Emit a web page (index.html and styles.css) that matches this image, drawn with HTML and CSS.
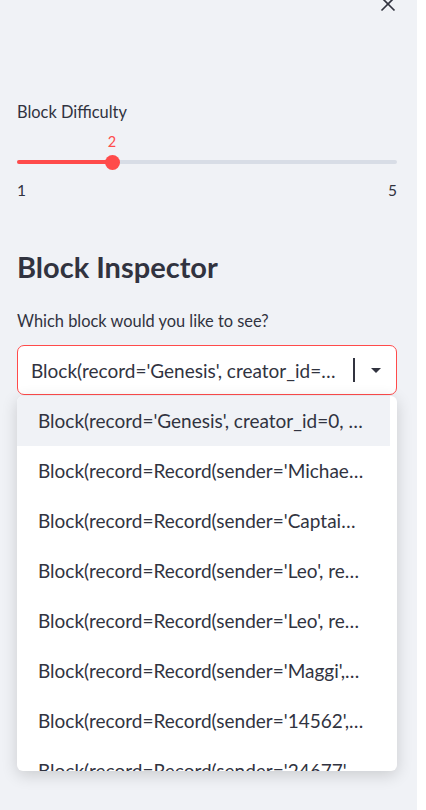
FILE: index.html
```html
<!DOCTYPE html>
<html lang="en">
<head>
    <meta charset="UTF-8">
    <meta name="viewport" content="width=device-width, initial-scale=1.0">
    <title>Blockchain</title>
    <link rel="stylesheet" href="styles.css">
</head>
<body>
    <aside class="sidebar">
        <div class="sidebar-header">
            <button class="close-btn" aria-label="Close sidebar">
                <svg width="16" height="16" viewBox="0 0 16 16">
                    <line x1="1.5" y1="1.5" x2="14.5" y2="14.5" />
                    <line x1="14.5" y1="1.5" x2="1.5" y2="14.5" />
                </svg>
            </button>
        </div>

        <div class="widget">
            <label class="widget-label">Block Difficulty</label>
            <div class="slider">
                <div class="slider-track">
                    <div class="slider-fill" style="width: 25%"></div>
                </div>
                <div class="slider-thumb" style="left: 25%">
                    <span class="slider-value">2</span>
                </div>
            </div>
            <div class="slider-ticks">
                <span>1</span>
                <span>5</span>
            </div>
        </div>

        <h2 class="section-title">Block Inspector</h2>

        <div class="widget">
            <label class="widget-label">Which block would you like to see?</label>
            <div class="select">
                <div class="select-box">
                    <div class="select-value">Block(record='Genesis', creator_id=…</div>
                    <div class="select-divider"></div>
                    <div class="select-caret"></div>
                </div>
                <ul class="select-menu">
                    <li class="option active">Block(record='Genesis', creator_id=0, …</li>
                    <li class="option">Block(record=Record(sender='Michae…</li>
                    <li class="option">Block(record=Record(sender='Captai…</li>
                    <li class="option">Block(record=Record(sender='Leo', re…</li>
                    <li class="option">Block(record=Record(sender='Leo', re…</li>
                    <li class="option">Block(record=Record(sender='Maggi',…</li>
                    <li class="option">Block(record=Record(sender='14562',…</li>
                    <li class="option">Block(record=Record(sender='24677',…</li>
                </ul>
            </div>
        </div>
    </aside>
</body>
</html>
```

FILE: styles.css
```css
body {
    margin: 0;
    background: #ffffff;
    font-family: Lato, "Noto Sans", sans-serif;
    color: #31333f;
}
.sidebar {
    width: 417px;
    height: 810px;
    box-sizing: border-box;
    padding: 0 20px 0 17px;
    background-color: #f0f2f6;
    overflow: hidden;
}
.sidebar-header {
    display: flex;
    justify-content: flex-end;
    height: 100px;
}
.close-btn {
    width: 16px;
    height: 16px;
    margin: -4px 1px 0 0;
    padding: 0;
    border: none;
    background: none;
    cursor: pointer;
}
.close-btn svg line {
    stroke: #31333f;
    stroke-width: 1.7;
}
.widget-label {
    display: block;
    font-size: 16.4px;
    line-height: 24px;
}
.slider {
    position: relative;
    height: 24px;
    margin-top: 26px;
}
.slider-track {
    position: absolute;
    left: 0;
    right: 0;
    top: 10px;
    height: 4px;
    border-radius: 2px;
    background-color: #d8dde6;
}
.slider-fill {
    height: 100%;
    border-radius: 2px;
    background-color: #ff4b4b;
}
.slider-thumb {
    position: absolute;
    top: 4.5px;
    width: 15px;
    height: 15px;
    margin-left: -7.5px;
    border-radius: 50%;
    background-color: #ff4b4b;
}
.slider-value {
    position: absolute;
    left: 50%;
    top: -22px;
    transform: translateX(-50%);
    font-size: 14.5px;
    line-height: 18px;
    color: #ff4b4b;
}
.slider-ticks {
    display: flex;
    justify-content: space-between;
    margin-top: 6px;
    font-size: 15.5px;
    line-height: 20px;
}
.section-title {
    margin: 49px 0 0;
    font-size: 29px;
    font-weight: 700;
    line-height: 36px;
}
.section-title + .widget .widget-label {
    margin-top: 24px;
}
.select {
    position: relative;
    margin-top: 12px;
}
.select-box {
    display: flex;
    align-items: center;
    height: 50px;
    box-sizing: border-box;
    padding: 0 15px 0 13px;
    border: 1px solid #ff4b4b;
    border-radius: 7px;
    background: #ffffff;
}
.select-value {
    flex: 1;
    font-size: 19px;
    white-space: nowrap;
    overflow: hidden;
}
.select-divider {
    width: 2px;
    height: 24px;
    margin-left: 8px;
    background-color: #31333f;
}
.select-caret {
    width: 0;
    height: 0;
    margin-left: 16px;
    border-left: 5px solid transparent;
    border-right: 5px solid transparent;
    border-top: 5px solid #31333f;
}
.select-menu {
    position: absolute;
    left: 0;
    right: 0;
    top: 51px;
    max-height: 375px;
    margin: 0;
    padding: 0 7px 0 0;
    list-style: none;
    overflow: hidden;
    border-radius: 6px;
    background: #ffffff;
    box-shadow: 0 4px 16px rgba(0, 0, 0, 0.16);
}
.option {
    height: 50px;
    box-sizing: border-box;
    padding: 0 8px 0 21px;
    font-size: 19px;
    line-height: 50px;
    white-space: nowrap;
}
.option.active {
    background-color: #f0f2f6;
}
```
